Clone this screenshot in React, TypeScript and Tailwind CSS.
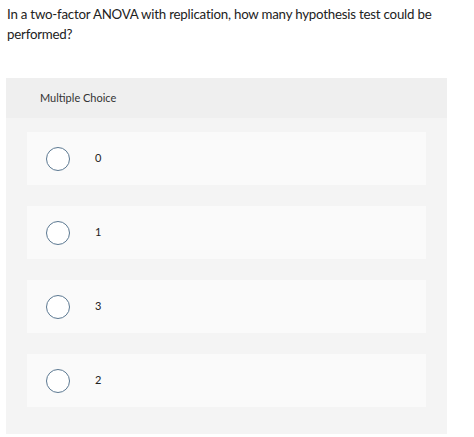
const choices = ["0", "1", "3", "2"];

export default function App() {
  return (
    <div className="min-h-[437px] w-[474px] bg-white font-['Lato','Open_Sans',sans-serif] text-[#222]">
      <p className="px-[7px] pt-[4px] text-[13.3px] leading-[20px] tracking-[-0.22px]">
        In a two-factor ANOVA with replication, how many hypothesis test could be performed?
      </p>

      <div className="ml-[6px] mt-[34px] w-[441px] bg-[#f4f4f4]">
        <div className="flex h-[40px] items-center bg-[#efefef] pl-[34px] text-[11px] text-[#333]">
          Multiple Choice
        </div>
        <div className="flex flex-col gap-[21px] px-[21px] pb-[27px] pt-[14px]">
          {choices.map((c) => (
            <div key={c} className="flex h-[53px] items-center bg-[#fafafa]">
              <span className="ml-[19px] h-[24px] w-[24px] rounded-full border-[1.5px] border-[#5b7891] bg-white" />
              <span className="ml-[25px] text-[11px] text-[#222]">{c}</span>
            </div>
          ))}
        </div>
      </div>
    </div>
  );
}
